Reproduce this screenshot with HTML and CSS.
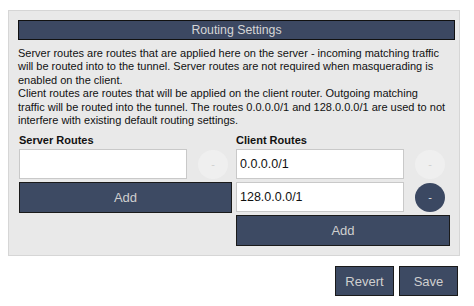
FILE: index.html
```html
<!DOCTYPE html>
<html lang="en">
<head>
  <meta charset="UTF-8">
  <title>Routing Settings</title>
  <link rel="stylesheet" href="styles.css">
</head>
<body>
  <div class="panel">
    <div class="title">Routing Settings</div>
    <p class="info">
      Server routes are routes that are applied here on the server - incoming matching traffic will be routed into to the tunnel. Server routes are not required when masquerading is enabled on the client.<br>
      Client routes are routes that will be applied on the client router. Outgoing matching<br>
      traffic will be routed into the tunnel. The routes 0.0.0.0/1 and 128.0.0.0/1 are used to not interfere with existing default routing settings.
    </p>
    <div class="routes">
      <div class="col">
        <div class="label">Server Routes</div>
        <div class="row">
          <input type="text" value="">
          <button class="del off">-</button>
        </div>
        <button class="add">Add</button>
      </div>
      <div class="col">
        <div class="label">Client Routes</div>
        <div class="row">
          <input type="text" value="0.0.0.0/1">
          <button class="del off">-</button>
        </div>
        <div class="row">
          <input type="text" value="128.0.0.0/1">
          <button class="del">-</button>
        </div>
        <button class="add">Add</button>
      </div>
    </div>
  </div>
  <div class="actions">
    <button class="btn">Revert</button>
    <button class="btn">Save</button>
  </div>
</body>
</html>
```

FILE: styles.css
```css
body {
  margin: 0;
  background: #fff;
  font-family: "Liberation Sans", Arial, sans-serif;
  color: #111;
}
.panel {
  margin: 10px 0 0 8px;
  width: 452px;
  box-sizing: border-box;
  background: #e9e9e9;
  border: 1px solid #d6d6d6;
  padding: 9px 4px 9px 9px;
}
.title {
  height: 18px;
  line-height: 18px;
  background: #3c4862;
  border: 1px solid #111;
  color: #d6d6d6;
  font-size: 12.3px;
  text-align: center;
}
.info {
  margin: 7px 0 0;
  font-size: 11px;
  line-height: 13.4px;
}
.routes {
  display: grid;
  grid-template-columns: 213px 214px;
  gap: 4px;
  padding-left: 1px;
}
.col {
  display: flex;
  flex-direction: column;
  gap: 3px;
}
.label {
  margin: 6px 0 -1px;
  line-height: 14px;
  font-size: 11px;
  font-weight: bold;
}
.row {
  display: flex;
  align-items: center;
}
.row input {
  width: 168px;
  height: 30px;
  box-sizing: border-box;
  border: 1px solid #c9c9c9;
  background: #fff;
  padding: 0 3px;
  font-family: inherit;
  font-size: 12.5px;
  color: #111;
}
.del {
  width: 30px;
  height: 29px;
  margin-left: 11px;
  border: none;
  border-radius: 50%;
  background: #3b4862;
  color: #e0e0e0;
  font-size: 11px;
  padding: 0;
}
.del.off {
  background: #efefef;
  color: #d0d0d0;
}
.add, .btn {
  height: 31px;
  background: #3d4a63;
  border: 1px solid #1a1a1a;
  color: #cfcfcf;
  font-family: inherit;
  font-size: 13px;
  padding: 0;
}
.actions {
  width: 452px;
  margin: 10px 0 0 8px;
  display: flex;
  justify-content: flex-end;
  gap: 5px;
  padding-right: 2px;
  box-sizing: border-box;
}
.btn {
  width: 59px;
  height: 30px;
}
```
